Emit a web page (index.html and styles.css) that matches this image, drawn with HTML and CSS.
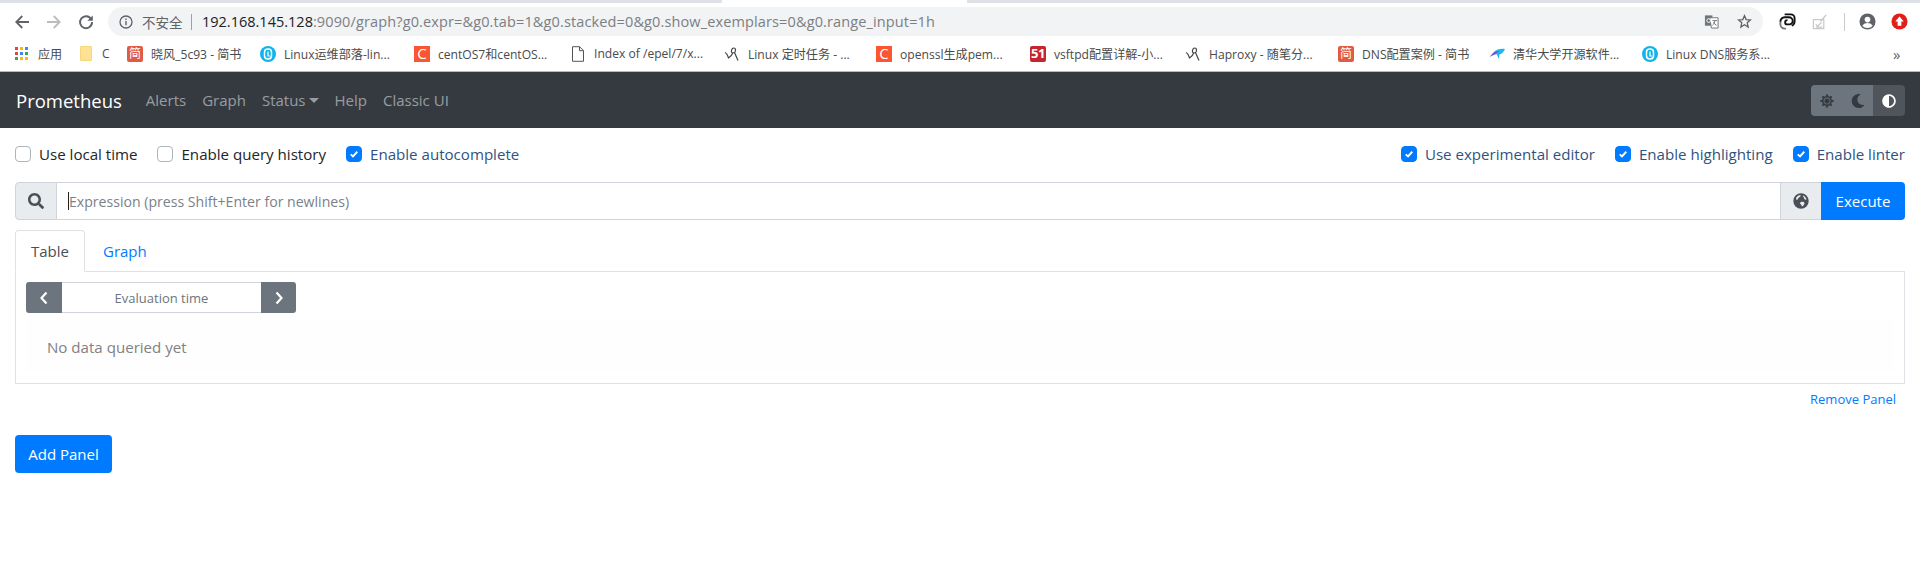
FILE: index.html
```
<!DOCTYPE html>
<html lang="zh">
<head>
<meta charset="utf-8">
<title>Prometheus Time Series Collection and Processing Server</title>
<link rel="stylesheet" href="styles.css">
</head>
<body>
<header class="browser">
  <div class="tabstrip"><div class="tab-active"></div></div>
  <div class="toolbar">
    <div class="nav-buttons">
      <svg class="tool-icon" viewBox="0 0 16 16"><path d="M15 8H2.500M8.300 2 2.300 8l6 6" fill="none" stroke="#5f6368" stroke-width="1.800"/></svg>
      <svg class="tool-icon" viewBox="0 0 16 16"><path d="M1 8h12.500M7.700 2l6 6-6 6" fill="none" stroke="#babcbe" stroke-width="1.800"/></svg>
      <svg class="tool-icon" viewBox="0 0 16 16"><path d="M13.200 5.200A6 6 0 1 0 14 8" fill="none" stroke="#5f6368" stroke-width="1.900"/><path d="M14.800 1.400v5.400H9.400z" fill="#5f6368"/></svg>
    </div>
    <div class="omnibox">
      <svg class="info-icon" viewBox="0 0 14 14"><circle cx="7" cy="7" r="6" fill="none" stroke="#5f6368" stroke-width="1.300"/><path d="M6.300 6h1.400v4.200H6.300zM6.300 3.600h1.400V5H6.300z" fill="#5f6368"/></svg>
      <span class="insecure">不安全</span>
      <span class="omni-sep"></span>
      <span class="url"><span class="url-host">192.168.145.128</span>:9090/graph?g0.expr=&amp;g0.tab=1&amp;g0.stacked=0&amp;g0.show_exemplars=0&amp;g0.range_input=1h</span>
      <span class="omni-end">
        <svg class="omni-icon" viewBox="0 0 16 16"><path d="M1 1.500h8v11H1z" fill="#6f7478"/><path d="M6 4h9v11H8z" fill="#fff" stroke="#6f7478"/><circle cx="5" cy="7" r="2" fill="none" stroke="#fff"/><path d="M9 7h5M11.500 7c0 2-1 4-2.500 5M10 9c1 1.500 2 2.500 3.500 3" fill="none" stroke="#6f7478"/></svg>
        <svg class="omni-icon" viewBox="0 0 16 16"><path d="m8 1.800 1.800 4.200 4.600.4-3.500 3 1 4.500L8 11.500 4.100 13.900l1-4.500-3.500-3 4.600-.4z" fill="none" stroke="#5f6368" stroke-width="1.400"/></svg>
      </span>
    </div>
    <div class="extensions">
      <svg class="ext-icon" viewBox="0 0 18 18"><path d="M7.500 16.500H6A4.500 4.500 0 0 1 1.500 12V8.500" fill="none" stroke="#777" stroke-width="2"/><path d="M1.500 9A4.500 4.500 0 0 1 6 4.500h4.500A4 4 0 0 1 14.500 8.500 3.500 3.500 0 0 1 11 12H8.500A2 2 0 0 1 6.500 10 2.500 2.500 0 0 1 9 7.500" fill="none" stroke="#111" stroke-width="2"/><path d="M6 1.500h6.500a4 4 0 0 1 4 4V9a5 5 0 0 1-3 4.500" fill="none" stroke="#111" stroke-width="2"/></svg>
      <svg class="ext-icon ext-check" viewBox="0 0 18 18"><path d="M1.500 7h11v9.500h-11zM4 12l2 2 4-4M4 15h7" fill="none" stroke="#c7c9ca" stroke-width="1.300"/><path d="m9 9 6-7" stroke="#c7c9ca" stroke-width="1.500"/></svg>
      <span class="ext-sep"></span>
      <svg class="ext-icon ext-profile" viewBox="0 0 18 18"><circle cx="9" cy="9" r="8.500" fill="#5f6368"/><circle cx="9" cy="7" r="3" fill="#fff"/><path d="M3.500 13.500c1.500-2 3.500-2.800 5.500-2.800s4 .8 5.500 2.800A7 7 0 0 1 9 16a7 7 0 0 1-5.500-2.500z" fill="#fff"/></svg>
      <svg class="ext-icon" viewBox="0 0 18 18"><circle cx="9" cy="9" r="8.500" fill="#e0201b"/><path d="M9 3.800 13.500 9H11v4.500H7V9H4.500z" fill="#fff"/></svg>
    </div>
  </div>
  <nav class="bookmarks">
    <a class="bm"><span class="bm-apps"><i class="r"></i><i class="y"></i><i class="b"></i><i class="r"></i><i class="b"></i><i class="g"></i><i class="g"></i><i class="y"></i><i class="y"></i></span><span>应用</span></a>
    <a class="bm"><span class="bm-folder"></span><span>C</span></a>
    <a class="bm"><span class="bm-logo jian">简</span><span>晓风_5c93 - 简书</span></a>
    <a class="bm"><svg class="bm-svg" viewBox="0 0 16 16"><circle cx="8" cy="8" r="8" fill="#10b3ea"/><rect x="4.500" y="3" width="7" height="10" rx="3.200" fill="none" stroke="#fff" stroke-width="1.500"/><path d="M8 5.500V10h2" fill="none" stroke="#fff" stroke-width="1.200"/></svg><span>Linux运维部落-lin...</span></a>
    <a class="bm"><span class="bm-logo csdn">C</span><span>centOS7和centOS...</span></a>
    <a class="bm"><svg class="bm-svg" viewBox="0 0 14 16"><path d="M1.500.7h7l4 4v10.600h-11zM8.500.7v4h4" fill="#fff" stroke="#555"/></svg><span>Index of /epel/7/x...</span></a>
    <a class="bm"><svg class="bm-svg" viewBox="0 0 16 16"><path d="M1 6.500c1.500.5 2.500 2.500 3.500 5.500 2-1 3.500-3 4.500-5.500M7.500 6.500C7 3.500 8.500 2 10 2s2 2 1 4c-.8 1-2 1.200-3.500.5M10.500 6.500l3.500 8" fill="none" stroke="#444" stroke-width="1.200"/></svg><span>Linux 定时任务 - ...</span></a>
    <a class="bm"><span class="bm-logo csdn">C</span><span>openssl生成pem...</span></a>
    <a class="bm"><span class="bm-logo fifty">51</span><span>vsftpd配置详解-小...</span></a>
    <a class="bm"><svg class="bm-svg" viewBox="0 0 16 16"><path d="M1 6.500c1.500.5 2.500 2.500 3.500 5.500 2-1 3.500-3 4.500-5.500M7.500 6.500C7 3.500 8.500 2 10 2s2 2 1 4c-.8 1-2 1.200-3.500.5M10.500 6.500l3.500 8" fill="none" stroke="#444" stroke-width="1.200"/></svg><span>Haproxy - 随笔分...</span></a>
    <a class="bm"><span class="bm-logo jian">简</span><span>DNS配置案例 - 简书</span></a>
    <a class="bm"><svg class="bm-svg" viewBox="0 0 16 16"><path d="M3 10C4 5 9 2 16 3c-1 2.500-3 5-5.500 5.500L9.500 13 8 8.500C6 8 4 9 3 10z" fill="#1fb6f0"/><path d="M1 11C3 7 6 5.500 10 5 8 7 6.500 8 5.500 8.500 4 9 2.500 10 1 11z" fill="#7a4bc9"/></svg><span>清华大学开源软件...</span></a>
    <a class="bm"><svg class="bm-svg" viewBox="0 0 16 16"><circle cx="8" cy="8" r="8" fill="#10b3ea"/><rect x="4.500" y="3" width="7" height="10" rx="3.200" fill="none" stroke="#fff" stroke-width="1.500"/><path d="M8 5.500V10h2" fill="none" stroke="#fff" stroke-width="1.200"/></svg><span>Linux DNS服务系...</span></a>
    <span class="bm-more">»</span>
  </nav>
</header>

<div class="navbar">
  <a class="brand">Prometheus</a>
  <a class="nav-link">Alerts</a>
  <a class="nav-link">Graph</a>
  <a class="nav-link">Status<span class="caret"></span></a>
  <a class="nav-link">Help</a>
  <a class="nav-link">Classic UI</a>
  <div class="theme-group">
    <span class="theme-btn"><svg class="theme-icon" viewBox="0 0 512 512"><path d="M256 160c-52.900 0-96 43.100-96 96s43.100 96 96 96 96-43.100 96-96-43.100-96-96-96zm246.400 80.500l-94.700-47.300 33.500-100.400c4.500-13.600-8.400-26.500-21.900-21.900l-100.400 33.500-47.400-94.800c-6.400-12.800-24.600-12.800-31 0l-47.300 94.700L92.700 70.800c-13.600-4.500-26.500 8.400-21.900 21.900l33.500 100.400-94.700 47.400c-12.800 6.400-12.800 24.600 0 31l94.700 47.300-33.500 100.500c-4.500 13.600 8.400 26.500 21.900 21.900l100.400-33.500 47.300 94.700c6.400 12.800 24.600 12.800 31 0l47.300-94.700 100.400 33.500c13.600 4.500 26.500-8.400 21.900-21.900l-33.500-100.400 94.700-47.300c13-6.500 13-24.700.2-31.100zm-155.900 106c-49.900 49.900-131.100 49.900-181 0-49.900-49.900-49.900-131.100 0-181 49.900-49.900 131.100-49.900 181 0 49.900 49.900 49.900 131.100 0 181z"/></svg></span>
    <span class="theme-btn"><svg class="theme-icon" viewBox="0 0 512 512"><path d="M283.211 512c78.962 0 151.079-35.925 198.857-94.792 7.068-8.708-.639-21.430-11.562-19.350-124.203 23.654-238.262-71.576-238.262-196.954 0-72.222 38.662-138.635 101.498-174.394 9.686-5.512 7.250-20.197-3.756-22.230A258.156 258.156 0 0 0 283.211 0c-141.309 0-256 114.511-256 256 0 141.309 114.511 256 256 256z"/></svg></span>
    <span class="theme-btn theme-active"><svg class="theme-icon" viewBox="0 0 512 512"><path d="M8 256c0 136.966 111.033 248 248 248s248-111.034 248-248S392.966 8 256 8 8 119.033 8 256zm248 184V72c101.705 0 184 82.311 184 184 0 101.705-82.311 184-184 184z"/></svg></span>
  </div>
</div>

<main class="content">
  <div class="options">
    <div class="option-group">
      <label class="check"><span class="box"></span>Use local time</label>
      <label class="check"><span class="box"></span>Enable query history</label>
      <label class="check on"><span class="box"><svg viewBox="0 0 8 8"><path d="M1.400 4.300 3.200 6l3.400-3.800" fill="none" stroke="#fff" stroke-width="1.500"/></svg></span>Enable autocomplete</label>
    </div>
    <div class="option-group">
      <label class="check on"><span class="box"><svg viewBox="0 0 8 8"><path d="M1.400 4.300 3.200 6l3.400-3.800" fill="none" stroke="#fff" stroke-width="1.500"/></svg></span>Use experimental editor</label>
      <label class="check on"><span class="box"><svg viewBox="0 0 8 8"><path d="M1.400 4.300 3.200 6l3.400-3.800" fill="none" stroke="#fff" stroke-width="1.500"/></svg></span>Enable highlighting</label>
      <label class="check on"><span class="box"><svg viewBox="0 0 8 8"><path d="M1.400 4.300 3.200 6l3.400-3.800" fill="none" stroke="#fff" stroke-width="1.500"/></svg></span>Enable linter</label>
    </div>
  </div>

  <div class="expr-group">
    <span class="addon addon-left"><svg class="addon-icon" viewBox="0 0 512 512"><path d="M505 442.700L405.300 343c-4.500-4.500-10.600-7-17-7H372c27.600-35.300 44-79.700 44-128C416 93.100 322.900 0 208 0S0 93.100 0 208s93.100 208 208 208c48.300 0 92.700-16.400 128-44v16.300c0 6.400 2.500 12.500 7 17l99.700 99.700c9.400 9.400 24.600 9.400 33.900 0l28.300-28.300c9.400-9.400 9.400-24.600.1-34zM208 336c-70.700 0-128-57.200-128-128 0-70.700 57.200-128 128-128 70.700 0 128 57.200 128 128 0 70.700-57.200 128-128 128z"/></svg></span>
    <div class="expr-input"><span class="cursor"></span><span class="placeholder">Expression (press Shift+Enter for newlines)</span></div>
    <span class="addon addon-right"><svg class="addon-icon" viewBox="0 0 16 16"><circle cx="8" cy="8" r="7.700"/><path d="M3 5c1-2 3-3 4.500-3 .5 1-.5 2-1.500 2.500S5 7 3.500 7zM10 2.500c1.500.5 3 2 3.500 4-1.500.5-2.500-.5-2.500-1.500S9.500 3.500 10 2.500zM8 9c1.500-.5 3 0 3.500 1 0 1.500-1.500 3-2.500 3.500-.5-1-.5-2-1.500-2.500S7 9.500 8 9z" fill="#e9ecef"/></svg></span>
    <button class="btn-primary btn-execute">Execute</button>
  </div>

  <div class="tabs">
    <a class="tab tab-current">Table</a>
    <a class="tab">Graph</a>
  </div>
  <section class="tab-pane">
    <div class="time-input">
      <button class="time-btn time-prev"><svg viewBox="0 0 10 16"><path d="M7.500 2.500 2.500 8l5 5.500" fill="none" stroke="#fff" stroke-width="2.200"/></svg></button>
      <span class="time-field">Evaluation time</span>
      <button class="time-btn time-next"><svg viewBox="0 0 10 16"><path d="M2.500 2.500 7.500 8l-5 5.500" fill="none" stroke="#fff" stroke-width="2.200"/></svg></button>
    </div>
    <div class="no-data">No data queried yet</div>
  </section>
  <div class="panel-footer"><a class="remove-panel">Remove Panel</a></div>
  <button class="btn-primary btn-add">Add Panel</button>
</main>
</body>
</html>
```
FILE: styles.css
```
* { box-sizing: border-box; }
html, body { margin: 0; padding: 0; height: 576px; overflow: hidden; background: #fff; }
body { font-family: "Open Sans", "Noto Sans CJK SC", sans-serif; font-size: 15.100px; color: #212529; }
button { font-family: inherit; border: 0; margin: 0; }
svg { display: block; }

.browser { height: 72px; border-bottom: 1px solid #b7b9bb; background: #fff; }
.tabstrip { height: 3px; background: #dee1e6; padding-left: 722px; }
.tab-active { width: 245px; height: 3px; background: #fff; }
.toolbar { height: 33px; display: flex; align-items: center; padding-top: 4px; }
.nav-buttons { width: 108px; flex: none; display: flex; gap: 16px; padding-left: 14px; }
.tool-icon { width: 16px; height: 16px; }
.omnibox { width: 1655px; height: 29px; flex: none; display: flex; align-items: center; background: #f1f3f4; border-radius: 15px; padding-left: 11px; }
.info-icon { width: 14px; height: 14px; margin-right: 9px; }
.insecure { font-size: 13.500px; color: #5f6368; width: 42px; white-space: nowrap; }
.omni-sep { width: 1px; height: 16px; background: #9aa0a6; margin: 0 10px 0 7px; }
.url { font-size: 14.500px; color: #7b7f83; white-space: nowrap; width: 740px; letter-spacing: .13px; }
.url-host { color: #202124; letter-spacing: 0; }
.omni-end { margin-left: auto; display: flex; gap: 18px; padding-right: 11px; }
.omni-icon { width: 15px; height: 15px; }
.extensions { flex: 1; display: flex; align-items: center; padding-left: 16px; }
.ext-icon { width: 17px; height: 17px; flex: none; }
.ext-check { margin-left: 16px; }
.ext-sep { width: 1px; height: 18px; background: #c8cacc; margin: 0 14px 0 15px; }
.ext-profile { margin-right: 15px; }

.bookmarks { height: 35px; display: grid; grid-template-columns: 65px 47px 133px 154px 156px 154px 152px 154px 155px 153px 151px 153px 251px auto; align-items: center; padding-left: 15px; font-size: 12.100px; color: #4a4a4a; }
.bm { display: flex; align-items: center; white-space: nowrap; min-width: 0; }
.bm-svg, .bm-logo, .bm-apps, .bm-folder { flex: none; margin-right: 8px; }
.bm-svg { width: 16px; height: 16px; }
.bm-apps { width: 13px; height: 13px; display: grid; grid-template-columns: repeat(3, 3px); gap: 2px; margin-right: 10px; }
.bm-apps i { display: block; width: 3px; height: 3px; }
.bm-apps .r { background: #ea4335; }
.bm-apps .y { background: #fbbc05; }
.bm-apps .g { background: #34a853; }
.bm-apps .b { background: #4285f4; }
.bm-folder { width: 12px; height: 15px; background: #fde293; border: 1px solid #f6d779; border-radius: 1px; margin-right: 10px; }
.bm-logo { width: 16px; height: 16px; display: flex; align-items: center; justify-content: center; color: #fff; font-size: 12px; line-height: 1; }
.jian { background: #e05a44; border-radius: 2px; }
.csdn { background: #fc5531; font-size: 15px; }
.fifty { background: #c5252f; border-radius: 2px; font-weight: 700; font-size: 13px; letter-spacing: -.5px; }
.bm-more { font-size: 15px; color: #5f6368; }

.navbar { height: 56px; background: #343a40; display: flex; align-items: center; padding: 0 16px; }
.brand { font-size: 18.500px; color: #fff; margin-right: 24px; }
.nav-link { color: rgba(255, 255, 255, .5); font-size: 15px; margin-right: 16px; display: flex; align-items: center; }
.caret { width: 0; height: 0; margin-left: 3px; border-top: 5px solid rgba(255, 255, 255, .5); border-left: 5px solid transparent; border-right: 5px solid transparent; }
.theme-group { margin-left: auto; height: 31px; display: flex; border-radius: 4px; overflow: hidden; margin-right: -1px; margin-top: 1px; }
.theme-btn { width: 31px; background: #6c757d; display: flex; align-items: center; justify-content: center; fill: #343a40; }
.theme-icon { width: 14px; height: 14px; }
.theme-active { width: 32px; background: #4f555b; fill: #fff; }

.content { padding: 0 15px; }
.options { height: 54px; padding-bottom: 2px; display: flex; justify-content: space-between; align-items: center; }
.option-group { display: flex; gap: 20px; }
.check { display: flex; align-items: center; gap: 8px; white-space: nowrap; }
.box { width: 16px; height: 16px; border: 1px solid #adb5bd; border-radius: 4px; background: #fff; display: flex; align-items: center; justify-content: center; }
.box svg { width: 10px; height: 10px; }
.check.on { color: #2f5380; }
.check.on .box { background: #007bff; border-color: #007bff; }

.expr-group { height: 38px; display: flex; }
.addon { width: 41px; flex: none; background: #e9ecef; border: 1px solid #ced4da; display: flex; align-items: center; justify-content: center; }
.addon-left { width: 42px; border-radius: 4px 0 0 4px; }
.addon-right { border-right: 0; }
.addon-icon { width: 16px; height: 16px; fill: #495057; }
.expr-input { flex: 1; display: flex; align-items: center; padding-left: 11px; border-top: 1px solid #ced4da; border-bottom: 1px solid #ced4da; }
.cursor { width: 1px; height: 18px; background: #222; }
.placeholder { color: #7b8188; font-size: 14.100px; }
.btn-primary { background: #007bff; color: #fff; font-size: 15px; border-radius: 4px; }
.btn-execute { width: 84px; border-radius: 0 4px 4px 0; }

.tabs { margin-top: 10px; height: 42px; display: flex; border-bottom: 1px solid #dee2e6; }
.tab { height: 42px; padding: 0 16px; display: flex; align-items: center; color: #007bff; font-size: 15px; border: 1px solid transparent; border-radius: 4px 4px 0 0; margin-right: 3px; }
.tab-current { color: #495057; background: #fff; border-color: #dee2e6 #dee2e6 #fff; width: 70px; justify-content: center; padding: 0; }
.tab:last-child { padding-left: 14px; }
.tab-pane { height: 112px; border: 1px solid #dee2e6; border-top: 0; padding: 10px 10px 10px; }
.time-input { width: 270px; height: 31px; display: flex; }
.time-btn { width: 36px; background: #6c757d; display: flex; align-items: center; justify-content: center; padding: 0; }
.time-btn svg { width: 10px; height: 16px; }
.time-prev { border-radius: 3px 0 0 3px; }
.time-next { width: 35px; border-radius: 0 3px 3px 0; }
.time-field { flex: 1; border-top: 1px solid #ced4da; border-bottom: 1px solid #ced4da; display: flex; align-items: center; justify-content: center; font-size: 13px; color: #6c757d; }
.no-data { margin-top: 7px; height: 52px; background: #fefefe; color: #818182; padding: 2px 21px 0; display: flex; align-items: center; font-size: 15.100px; border-radius: 4px; }
.panel-footer { height: 51px; padding-top: 6px; padding-right: 9px; display: flex; justify-content: flex-end; }
.remove-panel { color: #007bff; font-size: 13px; line-height: 18px; }
.btn-add { width: 97px; height: 38px; display: block; }
```
